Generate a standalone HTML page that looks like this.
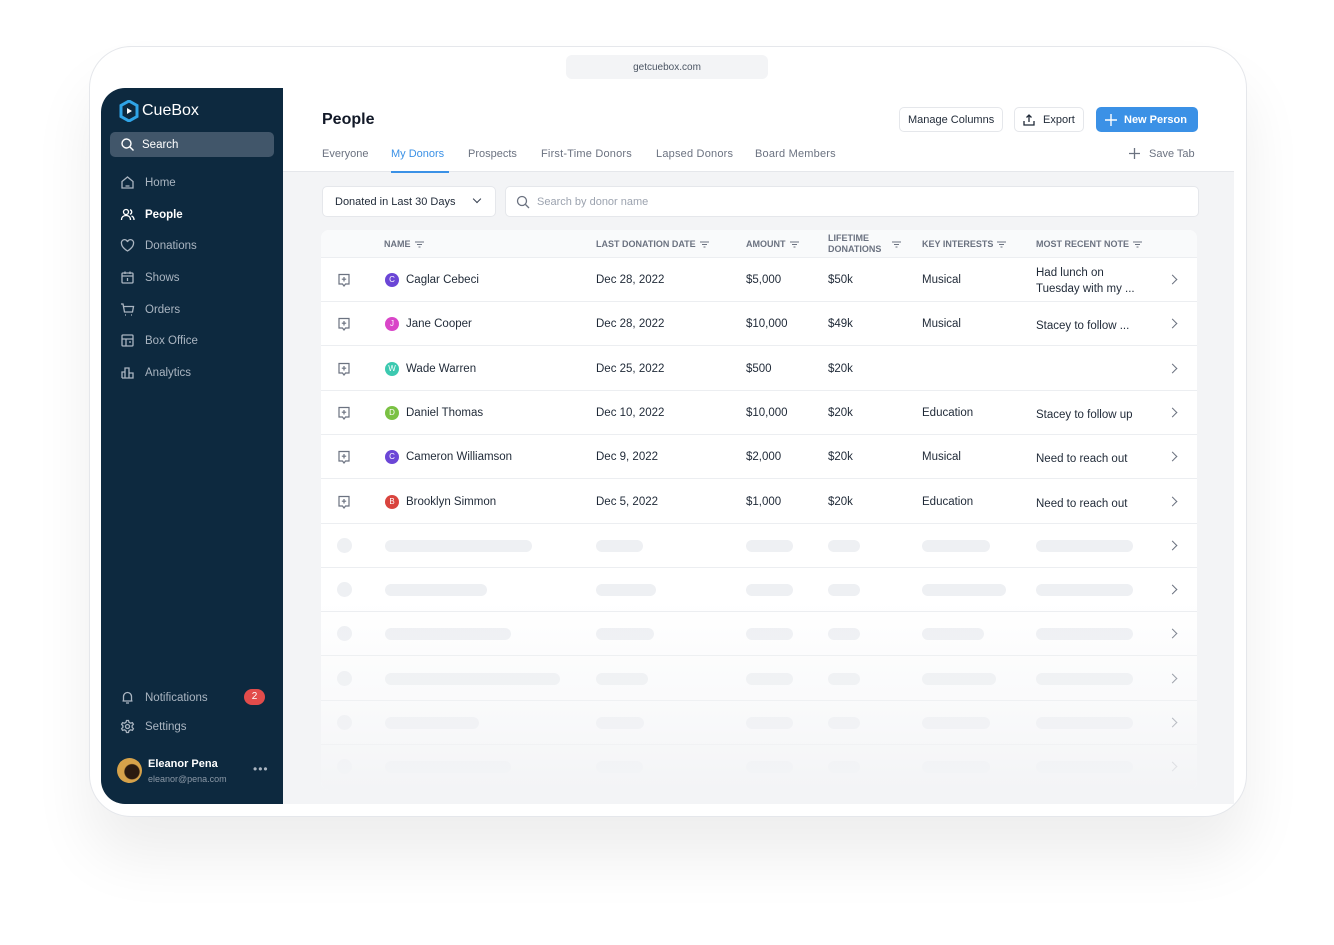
<!DOCTYPE html>
<html><head><meta charset="utf-8"><style>
*{box-sizing:border-box;margin:0;padding:0}
body{width:1334px;height:945px;background:#fff;font-family:"Liberation Sans",sans-serif;position:relative;overflow:hidden;color:#1f2937}
.a{position:absolute}
.frame{left:89px;top:46px;width:1158px;height:771px;border-radius:42px;background:#fff;border:1px solid #e5e7eb;box-shadow:0 40px 60px rgba(0,0,0,0.07)}
.url{left:566px;top:55px;width:202px;height:24px;border-radius:6px;background:#f3f4f6;font-size:10px;color:#4b5563;text-align:center;line-height:26px}
.screen{left:101px;top:88px;width:1133px;height:716px;border-radius:24px 0 0 24px;overflow:hidden;background:#f3f4f6}
.side{left:0;top:0;width:182px;height:716px;background:#0d293f}
.nav{left:19px;font-size:11.5px;color:#aab5c1;display:flex;align-items:center;gap:10px}
.nav svg{width:15px;height:15px;stroke:#aab5c1;fill:none;stroke-width:1.3}
.top{left:182px;top:0;width:951px;height:84px;background:#fff;border-bottom:1px solid #e5e7eb}
.btn{height:25px;border:1px solid #e5e7eb;border-radius:5px;font-size:11px;line-height:25px;padding:0 8px;background:#fff;color:#1f2937}
.tab{top:60px;font-size:11px;color:#6b7280}
.tbl{left:220px;top:142px;width:876px;height:560px;background:#fff;border-radius:8px;overflow:hidden}
.hd{left:0;top:0;width:876px;height:28px;background:#f9fafb;border-bottom:1px solid #eceef1;font-size:9px;color:#6b7280;font-weight:bold}
.row{left:0;width:876px;height:44px;border-bottom:1px solid #eceef1;font-size:11.5px;color:#1f2937}
.row span,.hd span{position:absolute}
.av{width:14px;height:14px;border-radius:50%;color:#fff;font-size:8px;text-align:center;line-height:14px}
.sk{position:absolute;height:12px;border-radius:6px;background:#eef0f3}
.chev{position:absolute;left:848px;width:7px;height:7px;border-right:1.3px solid #6b7280;border-top:1.3px solid #6b7280;transform:rotate(45deg)}
.fi{display:inline-block;vertical-align:middle;margin-left:4px}
</style></head><body>
<div class="a frame"></div>
<div class="a url">getcuebox.com</div>
<div class="a screen">
 <div class="a side">
  <svg class="a" style="left:18px;top:12px" width="20" height="22" viewBox="0 0 20 22"><path d="M10 1L18 5.5V16.5L10 21L2 16.5V5.5Z" fill="none" stroke="#2fa4e7" stroke-width="3"/><path d="M8 8L13 11L8 14Z" fill="#fff"/></svg>
  <div class="a" style="left:41px;top:14px;font-size:16px;color:#fff">CueBox</div>
  <div class="a" style="left:9px;top:44px;width:164px;height:25px;border-radius:5px;background:#41566a"></div>
  <svg class="a" style="left:19px;top:49px" width="15" height="15" viewBox="0 0 15 15" fill="none" stroke="#fff" stroke-width="1.4"><circle cx="6.5" cy="6.5" r="4.5"/><path d="M10 10L13.5 13.5"/></svg>
  <div class="a" style="left:41px;top:51px;font-size:11.5px;color:#fff">Search</div>
  <div class="a nav" style="top:87px"><svg viewBox="0 0 15 15"><path d="M2 6.5L7.5 2L13 6.5V13H2Z M5.5 11H9.5"/></svg>Home</div>
  <div class="a nav" style="top:119px;color:#fff;font-weight:bold"><svg viewBox="0 0 15 15" style="stroke:#fff"><circle cx="6" cy="5" r="2.5"/><path d="M1.5 13c0-3 2-4.5 4.5-4.5s4.5 1.5 4.5 4.5M10 2.7a2.4 2.4 0 010 4.6M11.5 9c1.5.5 2.5 2 2.5 4"/></svg>People</div>
  <div class="a nav" style="top:150px"><svg viewBox="0 0 15 15"><path d="M7.5 13S1.5 9.5 1.5 5.5A3 3 0 017.5 4a3 3 0 016 1.5C13.5 9.5 7.5 13 7.5 13Z"/></svg>Donations</div>
  <div class="a nav" style="top:182px"><svg viewBox="0 0 15 15"><rect x="2" y="3" width="11" height="10" rx="1"/><path d="M2 6H13M5 1.5V4M10 1.5V4M7.5 8V11"/></svg>Shows</div>
  <div class="a nav" style="top:214px"><svg viewBox="0 0 15 15"><path d="M1 2H3L4.5 10H12.5L13.5 4.5H3.5M5 13h1M11 13h1"/></svg>Orders</div>
  <div class="a nav" style="top:245px"><svg viewBox="0 0 15 15"><rect x="2" y="2" width="11" height="11" rx="1"/><path d="M2 6H13M6 6V13M9 9H11"/></svg>Box Office</div>
  <div class="a nav" style="top:277px"><svg viewBox="0 0 15 15"><path d="M2 13V7H5V13M5 13V3H9V13M9 13V8H13V13H2"/></svg>Analytics</div>
  <div class="a nav" style="top:602px"><svg viewBox="0 0 15 15"><path d="M3.5 11V6.5a4 4 0 018 0V11H2.5h10M6 13h3"/></svg>Notifications</div>
  <div class="a" style="left:143px;top:601px;width:21px;height:16px;border-radius:8px;background:#e24c4b;color:#fff;font-size:10px;text-align:center;line-height:16px">2</div>
  <div class="a nav" style="top:631px"><svg viewBox="0 0 15 15"><circle cx="7.5" cy="7.5" r="2"/><path d="M6.5 1.5h2l.5 1.8 1.6.9 1.8-.6 1 1.7-1.3 1.4v1.6l1.3 1.4-1 1.7-1.8-.6-1.6.9-.5 1.8h-2L6 11.7l-1.6-.9-1.8.6-1-1.7 1.3-1.4V6.7L1.6 5.3l1-1.7 1.8.6L6 3.3Z"/></svg>Settings</div>
  <div class="a" style="left:16px;top:670px;width:25px;height:25px;border-radius:50%;background:radial-gradient(circle at 60% 55%,#2a1a10 35%,#d6a24a 40%)"></div>
  <div class="a" style="left:47px;top:670px;font-size:11px;color:#fff;font-weight:bold">Eleanor Pena</div>
  <div class="a" style="left:47px;top:686px;font-size:9px;color:#8b98a6">eleanor@pena.com</div>
  <div class="a" style="left:152px;top:674px;font-size:12px;color:#aab5c1;letter-spacing:1px">•••</div>
 </div>
 <div class="a top">
  <div class="a" style="left:39px;top:23px;font-size:16px;color:#111827;font-weight:bold">People</div>
  <div class="a btn" style="left:616px;top:19px">Manage Columns</div>
  <div class="a btn" style="left:731px;top:19px;padding-left:28px">Export<svg class="a" style="left:7px;top:5px" width="14" height="14" viewBox="0 0 14 14" fill="none" stroke="#1f2937" stroke-width="1.3"><path d="M2 8V12H12V8M7 9V2M4.5 4.5L7 2L9.5 4.5"/></svg></div>
  <div class="a btn" style="left:813px;top:19px;width:102px;background:#3b91e6;border-color:#3b91e6;color:#fff;padding-left:27px;font-weight:bold">New Person<svg class="a" style="left:8px;top:6px" width="12" height="12" viewBox="0 0 12 12" stroke="#fff" stroke-width="1.4"><path d="M6 0V12M0 6H12"/></svg></div>
  <div class="a tab" style="left:39px">Everyone</div>
  <div class="a tab" style="left:108px;color:#3b91e6">My Donors</div>
  <div class="a" style="left:108px;top:83px;width:58px;height:2px;background:#3b91e6"></div>
  <div class="a tab" style="left:185px">Prospects</div>
  <div class="a tab" style="left:258px;letter-spacing:0.2px">First-Time Donors</div>
  <div class="a tab" style="left:373px;letter-spacing:0.2px">Lapsed Donors</div>
  <div class="a tab" style="left:472px;letter-spacing:0.2px">Board Members</div>
  <svg class="a" style="left:846px;top:60px" width="11" height="11" viewBox="0 0 11 11" stroke="#6b7280" stroke-width="1.3"><path d="M5.5 0V11M0 5.5H11"/></svg>
  <div class="a tab" style="left:866px">Save Tab</div>
 </div>
 <div class="a" style="left:221px;top:98px;width:174px;height:31px;background:#fff;border:1px solid #e5e7eb;border-radius:5px;font-size:11px;line-height:31px;padding-left:12px">Donated in Last 30 Days<span style="position:absolute;left:151px;top:9px;width:6px;height:6px;border-right:1.3px solid #374151;border-bottom:1.3px solid #374151;transform:rotate(45deg)"></span></div>
 <div class="a" style="left:404px;top:98px;width:694px;height:31px;background:#fff;border:1px solid #e5e7eb;border-radius:5px;font-size:11px;line-height:31px;padding-left:31px;color:#9ca3af">Search by donor name<svg class="a" style="left:10px;top:8px" width="14" height="14" viewBox="0 0 14 14" fill="none" stroke="#6b7280" stroke-width="1.3"><circle cx="6" cy="6" r="4.5"/><path d="M9.5 9.5L13 13"/></svg></div>
 <div class="a tbl">
  <div class="a hd">
   <span style="left:63px;top:9px">NAME<svg class="fi" width="9" height="7" viewBox="0 0 9 7" stroke="#6b7280" stroke-width="1"><path d="M0 1H9M2 3.5H7M3.5 6H5.5"/></svg></span>
   <span style="left:275px;top:9px">LAST DONATION DATE<svg class="fi" width="9" height="7" viewBox="0 0 9 7" stroke="#6b7280" stroke-width="1"><path d="M0 1H9M2 3.5H7M3.5 6H5.5"/></svg></span>
   <span style="left:425px;top:9px">AMOUNT<svg class="fi" width="9" height="7" viewBox="0 0 9 7" stroke="#6b7280" stroke-width="1"><path d="M0 1H9M2 3.5H7M3.5 6H5.5"/></svg></span>
   <span style="left:507px;top:3px;line-height:11px">LIFETIME<br>DONATIONS</span><span style="left:567px;top:9px"><svg class="fi" width="9" height="7" viewBox="0 0 9 7" stroke="#6b7280" stroke-width="1"><path d="M0 1H9M2 3.5H7M3.5 6H5.5"/></svg></span>
   <span style="left:601px;top:9px">KEY INTERESTS<svg class="fi" width="9" height="7" viewBox="0 0 9 7" stroke="#6b7280" stroke-width="1"><path d="M0 1H9M2 3.5H7M3.5 6H5.5"/></svg></span>
   <span style="left:715px;top:9px">MOST RECENT NOTE<svg class="fi" width="9" height="7" viewBox="0 0 9 7" stroke="#6b7280" stroke-width="1"><path d="M0 1H9M2 3.5H7M3.5 6H5.5"/></svg></span>
  </div>
  <div id="rows"></div>
  <div class="a" style="left:0;top:370px;width:876px;height:200px;background:linear-gradient(rgba(243,244,246,0),rgba(243,244,246,0.55) 60%,#f3f4f6 95%)"></div>
 </div>
</div>
<script>
var d=[["C","#6b46d6","Caglar Cebeci","Dec 28, 2022","$5,000","$50k","Musical","Had lunch on<br>Tuesday with my ..."],
["J","#d946c8","Jane Cooper","Dec 28, 2022","$10,000","$49k","Musical","Stacey to follow ..."],
["W","#3cc9b0","Wade Warren","Dec 25, 2022","$500","$20k","",""],
["D","#7ac143","Daniel Thomas","Dec 10, 2022","$10,000","$20k","Education","Stacey to follow up"],
["C","#6b46d6","Cameron Williamson","Dec 9, 2022","$2,000","$20k","Musical","Need to reach out"],
["B","#d9443e","Brooklyn Simmon","Dec 5, 2022","$1,000","$20k","Education","Need to reach out"]];
var sk=[[147,47,47,32,68,97],[102,60,47,32,84,97],[126,58,47,32,62,97],[175,52,47,32,74,97],[94,48,47,32,68,97],[126,47,47,32,68,97]];
var h="";
for(var i=0;i<12;i++){var t=28+i*44.3;h+='<div class="a row" style="top:'+t+'px">';
 if(i<6){var r=d[i];
 h+='<svg style="position:absolute;left:16px;top:15px" width="14" height="15" viewBox="0 0 14 15" fill="none" stroke="#6b7280" stroke-width="1.2"><path d="M2 1.5H12V11H8.5L7 13L5.5 11H2Z M7 4V8.5M4.8 6.2H9.2"/></svg>';
 h+='<span class="av" style="left:64px;top:15px;background:'+r[1]+'">'+r[0]+'</span>';
 h+='<span style="left:85px;top:16px">'+r[2]+'</span><span style="left:275px;top:16px">'+r[3]+'</span><span style="left:425px;top:16px">'+r[4]+'</span><span style="left:507px;top:16px">'+r[5]+'</span><span style="left:601px;top:16px">'+r[6]+'</span>';
 h+='<span style="left:715px;top:'+(i==0?7:16)+'px;line-height:16px">'+r[7]+'</span>';}
 else{var s=sk[i-6];h+='<div class="sk" style="left:16px;top:14px;width:15px;height:15px;border-radius:50%"></div>';
 var xs=[64,275,425,507,601,715];for(var j=0;j<6;j++)h+='<div class="sk" style="left:'+xs[j]+'px;top:16px;width:'+s[j]+'px"></div>';}
 h+='<span class="chev" style="top:18px"></span></div>';}
document.getElementById("rows").innerHTML=h;
</script>
</body></html>
